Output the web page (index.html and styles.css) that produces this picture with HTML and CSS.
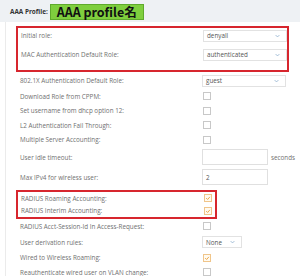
FILE: index.html
```html
<!DOCTYPE html>
<html lang="ja">
<head>
    <meta charset="UTF-8">
    <title>AAA Profile</title>
    <link rel="stylesheet" href="styles.css">
</head>
<body>
    <div class="header">
        <span class="title">AAA Profile:</span>
        <span class="name">AAA profile名</span>
    </div>

    <div class="panel">
        <div class="group group-wide">
            <div class="row row-sel">
                <div class="label">Initial role:</div>
                <div class="select">denyall<svg viewBox="0 0 8 5"><path d="M1 1l3 3 3-3"/></svg></div>
            </div>
            <div class="row row-sel">
                <div class="label">MAC Authentication Default Role:</div>
                <div class="select">authenticated<svg viewBox="0 0 8 5"><path d="M1 1l3 3 3-3"/></svg></div>
            </div>
        </div>

        <div class="row row-sel first">
            <div class="label">802.1X Authentication Default Role:</div>
            <div class="select">guest<svg viewBox="0 0 8 5"><path d="M1 1l3 3 3-3"/></svg></div>
        </div>
        <div class="row row-chk">
            <div class="label">Download Role from CPPM:</div>
            <div class="check"></div>
        </div>
        <div class="row row-chk">
            <div class="label">Set username from dhcp option 12:</div>
            <div class="check"></div>
        </div>
        <div class="row row-chk">
            <div class="label">L2 Authentication Fail Through:</div>
            <div class="check"></div>
        </div>
        <div class="row row-chk">
            <div class="label">Multiple Server Accounting:</div>
            <div class="check"></div>
        </div>
        <div class="row row-input">
            <div class="label">User idle timeout:</div>
            <div class="input"></div>
            <span class="unit">seconds</span>
        </div>
        <div class="row row-input">
            <div class="label">Max IPv4 for wireless user:</div>
            <div class="input">2</div>
        </div>

        <div class="group group-narrow">
            <div class="row row-red">
                <div class="label">RADIUS Roaming Accounting:</div>
                <div class="check checked"><svg viewBox="0 0 8 8"><path d="M1.5 4l2 2 3-3.5"/></svg></div>
            </div>
            <div class="row row-red">
                <div class="label">RADIUS Interim Accounting:</div>
                <div class="check checked"><svg viewBox="0 0 8 8"><path d="M1.5 4l2 2 3-3.5"/></svg></div>
            </div>
        </div>

        <div class="row row-chk">
            <div class="label">RADIUS Acct-Session-Id In Access-Request:</div>
            <div class="check"></div>
        </div>
        <div class="row row-sel2">
            <div class="label">User derivation rules:</div>
            <div class="select small">None<svg viewBox="0 0 8 5"><path d="M1 1l3 3 3-3"/></svg></div>
        </div>
        <div class="row row-chk">
            <div class="label">Wired to Wireless Roaming:</div>
            <div class="check checked"><svg viewBox="0 0 8 8"><path d="M1.5 4l2 2 3-3.5"/></svg></div>
        </div>
        <div class="row row-chk">
            <div class="label">Reauthenticate wired user on VLAN change:</div>
            <div class="check"></div>
        </div>
    </div>
</body>
</html>
```

FILE: styles.css
```css
body {
    margin: 0;
    width: 300px;
    height: 276px;
    overflow: hidden;
    background: #fff;
    font-family: "Open Sans", "Noto Sans", sans-serif;
    font-size: 6.3px;
    color: #707070;
}
.header {
    height: 22px;
    background: #eef1f4;
    display: flex;
    align-items: center;
    padding-left: 10px;
}
.title {
    font-weight: bold;
    color: #333;
    font-size: 6.4px;
    margin-right: 2px;
}
.name {
    background: #7fcf3e;
    border: 1px solid #5faa2c;
    color: #111;
    font-family: "Noto Sans CJK JP", sans-serif;
    font-weight: bold;
    font-size: 12.5px;
    line-height: 13px;
    width: 92px;
    height: 14px;
    text-align: center;
    margin-top: 2px;
}
.panel {
    margin-left: 5px;
    border-left: 1px solid #ebebeb;
    padding-top: 4px;
    height: 260px;
}
.group {
    border: 2px solid #d7262e;
    margin-left: 10px;
}
.group-wide {
    width: 269px;
    padding: 1px 0 3px;
}
.group-narrow {
    width: 197px;
    margin-top: 3px;
    padding: 0;
}
.row {
    display: flex;
    align-items: center;
    padding-left: 14px;
}
.group .row {
    padding-left: 3px;
}
.label {
    width: 182px;
    flex-shrink: 0;
}
.row-sel {
    height: 13px;
    margin-bottom: 6px;
}
.row-sel.first {
    margin-top: 2px;
    margin-bottom: 2px;
}
.row-chk {
    height: 14.5px;
}
.row-input {
    height: 20px;
}
.row-red {
    height: 12.5px;
}
.row-sel2 {
    height: 17px;
}
.select {
    height: 12px;
    border: 1px solid #e2e2e2;
    display: flex;
    align-items: center;
    justify-content: space-between;
    padding: 0 6px 0 3px;
    box-sizing: border-box;
    width: 84px;
    color: #555;
}
.select.small {
    width: 40px;
}
.select svg {
    width: 5px;
    height: 4px;
    fill: none;
    stroke: #8fb0cf;
    stroke-width: 1.3;
}
.check {
    width: 8px;
    height: 8px;
    border: 1px solid #c8c8c8;
    box-sizing: border-box;
    margin-left: 1px;
}
.check.checked {
    border-color: #f0c58a;
    background: #fffaf0;
    display: flex;
}
.check.checked svg {
    width: 6px;
    height: 6px;
    fill: none;
    stroke: #eda84a;
    stroke-width: 1.3;
}
.input {
    width: 66px;
    height: 16px;
    border: 1px solid #e0e0e0;
    box-sizing: border-box;
    padding-left: 3px;
    display: flex;
    align-items: center;
    color: #555;
}
.unit {
    margin-left: 3px;
}
```
